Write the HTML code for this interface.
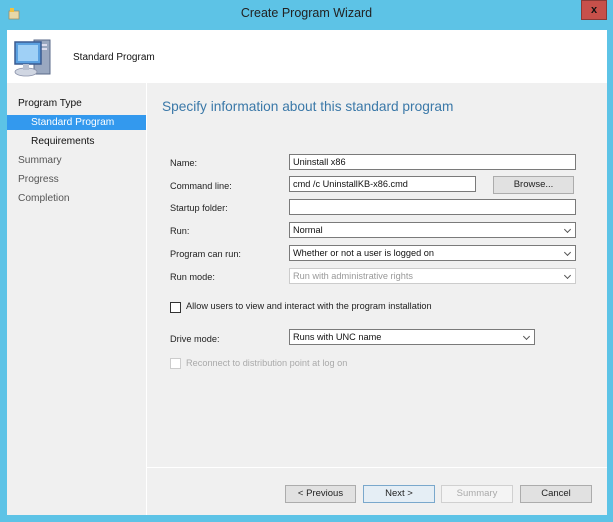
<!DOCTYPE html>
<html><head><style>
*{margin:0;padding:0;box-sizing:border-box}
body{width:613px;height:522px;background:#5dc3e6;font-family:"Liberation Sans",sans-serif;font-size:9px;color:#111;position:relative;overflow:hidden}
.a{position:absolute}
.title{left:0;top:6px;width:613px;text-align:center;font-size:12.5px;color:#222}
.close{left:581px;top:0;width:26px;height:20px;background:#c7504a;border:1px solid #8a3a36;color:#111;font-weight:bold;font-size:11px;text-align:center;line-height:18px}
.hdr{left:7px;top:30px;width:600px;height:53px;background:#fff}
.left{left:7px;top:83px;width:139px;height:432px;background:#f0f0f0}
.main{left:147px;top:83px;width:460px;height:432px;background:#f0f0f0}
.vsep{left:146px;top:83px;width:1px;height:432px;background:#fff}
.hsep{left:147px;top:467px;width:460px;height:1px;background:#fff}
.nav{left:18px;font-size:10.2px}
.lbl{left:170px;font-size:9.2px;color:#222}
.box{background:#fff;border:1px solid #7a7a7a;height:16px;font-size:9.2px;padding:2px 3px;line-height:11px;color:#111}
.dd::after{content:"";position:absolute;right:5px;top:4px;width:4px;height:4px;border-right:1.3px solid #555;border-bottom:1.3px solid #555;transform:rotate(45deg)}
.btn{height:18px;background:#e1e1e1;border:1px solid #acacac;text-align:center;line-height:16px;font-size:9.5px;color:#222}
.cb{width:11px;height:11px;border:1px solid #333;background:#fff}
</style></head><body>
<svg class="a" style="left:8px;top:8px" width="12" height="12"><rect x="1" y="3" width="10" height="8" fill="#e8d8a8" stroke="#9a8a60" stroke-width="0.7"/><rect x="2" y="0" width="4" height="4" fill="#f0c040"/></svg>
<div class="a title">Create Program Wizard</div>
<div class="a close">x</div>
<div class="a hdr"></div>
<svg class="a" style="left:12px;top:36px" width="44" height="42">
<rect x="22" y="4" width="16" height="34" fill="#9aa8c0" stroke="#5a6a88" stroke-width="1"/>
<rect x="25" y="8" width="10" height="2" fill="#dde"/><rect x="25" y="12" width="10" height="2" fill="#dde"/>
<rect x="3" y="6" width="26" height="22" fill="#5aa0e0" stroke="#3a5a90" stroke-width="1.5"/>
<rect x="6" y="9" width="20" height="16" fill="#9fd0f6"/>
<ellipse cx="14" cy="36" rx="11" ry="4" fill="#d0d6e2" stroke="#8890a8" stroke-width="0.8"/>
<rect x="11" y="28" width="6" height="6" fill="#b8c0d0"/>
</svg>
<div class="a" style="left:73px;top:52px;font-size:10px">Standard Program</div>
<div class="a left"></div>
<div class="a main"></div>
<div class="a vsep"></div>
<div class="a hsep"></div>
<div class="a nav" style="top:98px">Program Type</div>
<div class="a" style="left:7px;top:115px;width:139px;height:15px;background:#3399ee"></div>
<div class="a nav" style="left:31px;top:117px;color:#fff">Standard Program</div>
<div class="a nav" style="left:31px;top:136px">Requirements</div>
<div class="a nav" style="top:155px;color:#555">Summary</div>
<div class="a nav" style="top:174px;color:#555">Progress</div>
<div class="a nav" style="top:193px;color:#555">Completion</div>
<div class="a" style="left:162px;top:99px;font-size:13.7px;color:#3a78a8">Specify information about this standard program</div>

<div class="a lbl" style="top:158px">Name:</div>
<div class="a box" style="left:289px;top:154px;width:287px">Uninstall x86</div>
<div class="a lbl" style="top:181px">Command line:</div>
<div class="a box" style="left:289px;top:176px;width:187px">cmd /c UninstallKB-x86.cmd</div>
<div class="a btn" style="left:493px;top:176px;width:81px">Browse...</div>
<div class="a lbl" style="top:203px">Startup folder:</div>
<div class="a box" style="left:289px;top:199px;width:287px"></div>
<div class="a lbl" style="top:226px">Run:</div>
<div class="a box dd" style="left:289px;top:222px;width:287px">Normal</div>
<div class="a lbl" style="top:249px">Program can run:</div>
<div class="a box dd" style="left:289px;top:245px;width:287px">Whether or not a user is logged on</div>
<div class="a lbl" style="top:272px">Run mode:</div>
<div class="a box dd" style="left:289px;top:268px;width:287px;border-color:#ccc;color:#999">Run with administrative rights</div>
<div class="a cb" style="left:170px;top:302px"></div>
<div class="a lbl" style="left:186px;top:301px">Allow users to view and interact with the program installation</div>
<div class="a lbl" style="top:334px">Drive mode:</div>
<div class="a box dd" style="left:289px;top:329px;width:246px">Runs with UNC name</div>
<div class="a cb" style="left:170px;top:358px;border-color:#ccc"></div>
<div class="a lbl" style="left:186px;top:358px;color:#aaa">Reconnect to distribution point at log on</div>

<div class="a btn" style="left:285px;top:485px;width:71px">&lt; Previous</div>
<div class="a btn" style="left:363px;top:485px;width:72px;border-color:#7aa8cc;background:#e5eef5">Next &gt;</div>
<div class="a btn" style="left:441px;top:485px;width:72px;background:#f4f4f4;border-color:#d0d0d0;color:#aaa">Summary</div>
<div class="a btn" style="left:520px;top:485px;width:72px">Cancel</div>
</body></html>
